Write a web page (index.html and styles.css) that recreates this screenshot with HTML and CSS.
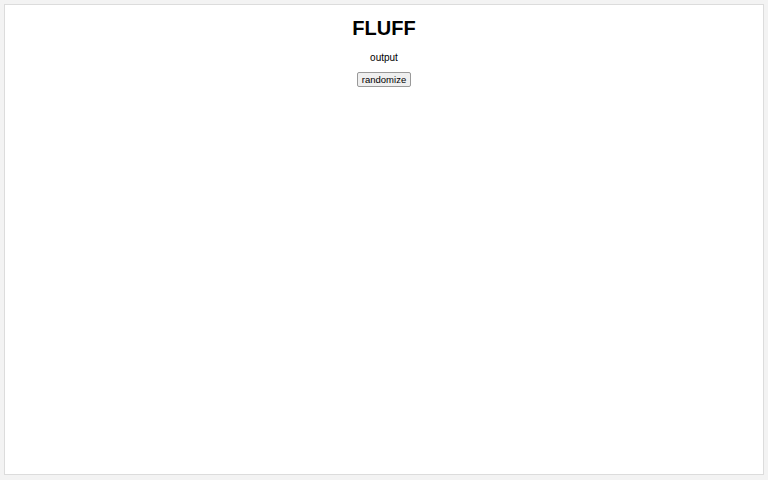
FILE: index.html
```html
<!DOCTYPE html>
<html lang="en">
  <head>
    <meta charset="UTF-8" />
    <title>FLUFF</title>
    <link rel="stylesheet" href="styles.css">
  </head>
  <body>
    <div class="frame">
      <h1>FLUFF</h1>
      <p id="output">output</p>
      <button id="randomize">randomize</button>
    </div>
  </body>
</html>
```

FILE: styles.css
```css
html,
body {
  margin: 0;
  padding: 0;
  height: 100%;
}
body {
  font-family: "Liberation Sans", Arial, sans-serif;
  background-color: #f3f3f3;
  padding: 4px 4px 5px 4px;
  box-sizing: border-box;
}
.frame {
  background: white;
  border: 1px solid #dcdcdc;
  height: 100%;
  box-sizing: border-box;
  text-align: center;
  padding-top: 12px;
}
h1 {
  font-size: 20px;
  margin: 0;
  line-height: 22px;
  color: #000;
}
#output {
  font-size: 10px;
  margin: 13px 0 5px 0;
  line-height: 12px;
}
#randomize {
  font-family: "Liberation Sans", Arial, sans-serif;
  font-size: 9.5px;
  padding: 1px 4px;
  border: 1px solid #999;
  border-radius: 2px;
  background: #efefef;
  height: 15px;
  line-height: 11px;
}
```
